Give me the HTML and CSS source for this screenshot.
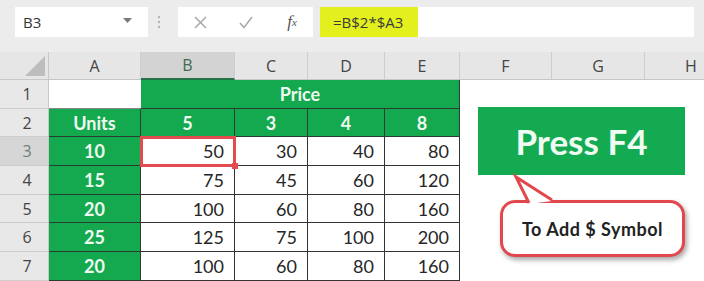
FILE: index.html
```html
<!DOCTYPE html>
<html lang="en">
<head>
    <meta charset="UTF-8">
    <title>Mixed Reference - Press F4</title>
    <link rel="stylesheet" href="styles.css">
</head>
<body>
    <div class="formula-bar">
        <div class="name-box">
            <span>B3</span>
            <svg class="drop" width="9" height="6" viewBox="0 0 9 6"><path d="M0 0 L9 0 L4.5 5 Z" fill="#7a7a7a"/></svg>
        </div>
        <div class="grip">
            <svg width="4" height="14" viewBox="0 0 4 14">
                <circle cx="2" cy="2" r="1.2" fill="#b5b5b5"/>
                <circle cx="2" cy="7" r="1.2" fill="#b5b5b5"/>
                <circle cx="2" cy="12" r="1.2" fill="#b5b5b5"/>
            </svg>
        </div>
        <div class="fx-buttons">
            <span class="slot">
                <svg width="13" height="13" viewBox="0 0 13 13"><path d="M1 1 L12 12 M12 1 L1 12" stroke="#a8a8a8" stroke-width="1.5" fill="none"/></svg>
            </span>
            <span class="slot">
                <svg width="14" height="13" viewBox="0 0 14 13"><path d="M1 7 L5 11.5 L13 1" stroke="#a8a8a8" stroke-width="1.5" fill="none"/></svg>
            </span>
            <span class="slot fx">f<sub>x</sub></span>
        </div>
        <div class="formula">
            <span class="formula-text">=B$2*$A3</span>
        </div>
    </div>

    <div class="sheet">
        <div class="grid">
            <!-- column headers -->
            <div class="corner">
                <svg width="20" height="20" viewBox="0 0 20 20"><path d="M20 0 L20 20 L0 20 Z" fill="#bdbdbd"/></svg>
            </div>
            <div class="col-head">A</div>
            <div class="col-head active">B</div>
            <div class="col-head">C</div>
            <div class="col-head">D</div>
            <div class="col-head">E</div>
            <div class="col-head">F</div>
            <div class="col-head">G</div>
            <div class="col-head">H</div>

            <!-- row 1 -->
            <div class="row-head">1</div>
            <div class="cell blank"></div>
            <div class="cell green merged">Price</div>
            <div class="cell"></div>
            <div class="cell"></div>
            <div class="cell"></div>

            <!-- row 2 -->
            <div class="row-head">2</div>
            <div class="cell green">Units</div>
            <div class="cell green">5</div>
            <div class="cell green">3</div>
            <div class="cell green">4</div>
            <div class="cell green">8</div>
            <div class="cell"></div>
            <div class="cell"></div>
            <div class="cell"></div>

            <!-- row 3 -->
            <div class="row-head active">3</div>
            <div class="cell green">10</div>
            <div class="cell num selected">50</div>
            <div class="cell num">30</div>
            <div class="cell num">40</div>
            <div class="cell num">80</div>
            <div class="cell"></div>
            <div class="cell"></div>
            <div class="cell"></div>

            <!-- row 4 -->
            <div class="row-head">4</div>
            <div class="cell green">15</div>
            <div class="cell num">75</div>
            <div class="cell num">45</div>
            <div class="cell num">60</div>
            <div class="cell num">120</div>
            <div class="cell"></div>
            <div class="cell"></div>
            <div class="cell"></div>

            <!-- row 5 -->
            <div class="row-head">5</div>
            <div class="cell green">20</div>
            <div class="cell num">100</div>
            <div class="cell num">60</div>
            <div class="cell num">80</div>
            <div class="cell num">160</div>
            <div class="cell"></div>
            <div class="cell"></div>
            <div class="cell"></div>

            <!-- row 6 -->
            <div class="row-head">6</div>
            <div class="cell green">25</div>
            <div class="cell num">125</div>
            <div class="cell num">75</div>
            <div class="cell num">100</div>
            <div class="cell num">200</div>
            <div class="cell"></div>
            <div class="cell"></div>
            <div class="cell"></div>

            <!-- row 7 -->
            <div class="row-head">7</div>
            <div class="cell green">20</div>
            <div class="cell num">100</div>
            <div class="cell num">60</div>
            <div class="cell num">80</div>
            <div class="cell num">160</div>
            <div class="cell"></div>
            <div class="cell"></div>
            <div class="cell"></div>
        </div>

        <!-- callouts sitting on top of the sheet -->
        <div class="press-box">Press F4</div>
        <div class="bubble">To Add $ Symbol</div>
        <svg class="tail" width="50" height="36" viewBox="0 0 50 36">
            <path d="M19 32 L6 5 L42 29 Z" fill="#ffffff"/>
            <path d="M19 31 L6 5 L42 28" fill="none" stroke="#e2474d" stroke-width="3" stroke-linejoin="miter"/>
        </svg>
    </div>
</body>
</html>
```

FILE: styles.css
```css
* {
    margin: 0;
    padding: 0;
    box-sizing: border-box;
}

body {
    width: 704px;
    height: 281px;
    overflow: hidden;
    background: #ffffff;
    font-family: 'Open Sans', sans-serif;
}

/* ---------- formula bar ---------- */

.formula-bar {
    height: 52px;
    background: #ececec;
    display: flex;
    align-items: flex-start;
    padding: 7px 0 0 15px;
}

.name-box {
    width: 133px;
    height: 30px;
    background: #ffffff;
    display: flex;
    align-items: center;
    justify-content: space-between;
    padding: 0 16px 0 8px;
    font-size: 15px;
    color: #333333;
}

.name-box .drop {
    margin-bottom: 3px;
}

.grip {
    width: 30px;
    height: 30px;
    display: flex;
    align-items: center;
    padding-left: 9px;
}

.fx-buttons {
    width: 135px;
    height: 30px;
    background: #ffffff;
    display: flex;
    align-items: center;
}

.slot {
    width: 45px;
    display: flex;
    justify-content: center;
    align-items: center;
}

.fx {
    font-family: 'Liberation Serif', serif;
    font-style: italic;
    font-size: 17px;
    color: #555555;
    padding-left: 3px;
}

.fx sub {
    font-size: 11px;
}

.formula {
    width: 374px;
    height: 30px;
    margin-left: 7px;
    background: #ffffff;
    display: flex;
}

.formula-text {
    width: 98px;
    background: #e4f01d;
    color: #3a3a3a;
    font-size: 15px;
    display: flex;
    align-items: center;
    padding-left: 13px;
}

/* ---------- sheet ---------- */

.sheet {
    position: relative;
    height: 229px;
    overflow: hidden;
}

.grid {
    display: grid;
    grid-template-columns: 49px 92px 94px 73px 77px 75px 92px 93px 93px;
    grid-template-rows: 28px 29px 28px 29px 29px 28px 29px 29px;
    width: 738px;
}

.corner {
    background: #e6e6e6;
    border-right: 1px solid #c8c8c8;
    border-bottom: 1px solid #c8c8c8;
    display: flex;
    align-items: flex-end;
    justify-content: flex-end;
    padding: 0 3px 3px 0;
}

.col-head {
    background: #e6e6e6;
    border-right: 1px solid #cdcdcd;
    border-bottom: 1px solid #c6c6c6;
    display: flex;
    align-items: center;
    justify-content: center;
    font-size: 16px;
    color: #444444;
}

.col-head.active {
    background: #d3d3d3;
    color: #3f6b4f;
    border-bottom: 2px solid #217346;
}

.row-head {
    background: #e8e8e8;
    border-right: 1px solid #c8c8c8;
    border-bottom: 1px solid #cdcdcd;
    display: flex;
    align-items: center;
    justify-content: center;
    padding-left: 6px;
    font-size: 16px;
    color: #444444;
}

.row-head.active {
    background: #d6d6d6;
    color: #6f7f74;
}

.cell {
    font-family: 'Lato', sans-serif;
    font-size: 18px;
    color: #262626;
    display: flex;
    align-items: center;
}

.cell.blank {
    border-bottom: 1px solid #8a8a8a;
}

.cell.green {
    background: #14a84f;
    color: #eefaf0;
    font-weight: 700;
    justify-content: center;
    border-right: 1px solid #2c3b30;
    border-bottom: 1px solid #2c3b30;
}

.cell.merged {
    grid-column: span 4;
}

.cell.num {
    justify-content: flex-end;
    padding-right: 10px;
    border-right: 1px solid #333333;
    border-bottom: 1px solid #333333;
}

.cell.selected {
    position: relative;
    outline: 3px solid #e34b4f;
    outline-offset: -2px;
}

.cell.selected::after {
    content: '';
    position: absolute;
    right: -4px;
    bottom: -4px;
    width: 6px;
    height: 6px;
    background: #e34b4f;
}

/* ---------- callouts ---------- */

.press-box {
    position: absolute;
    left: 478px;
    top: 55px;
    width: 207px;
    height: 68px;
    background: #13aa52;
    color: #eefcf2;
    font-family: 'Lato', sans-serif;
    font-weight: 700;
    font-size: 35px;
    display: flex;
    align-items: center;
    justify-content: center;
}

.bubble {
    position: absolute;
    left: 500px;
    top: 148px;
    width: 185px;
    height: 57px;
    background: #ffffff;
    border: 3px solid #e2474d;
    border-radius: 15px;
    box-shadow: 2px 3px 5px rgba(0, 0, 0, 0.35);
    font-family: 'Lato', sans-serif;
    font-weight: 700;
    font-size: 18px;
    letter-spacing: 0.5px;
    color: #222222;
    display: flex;
    align-items: center;
    justify-content: center;
}

.tail {
    position: absolute;
    left: 510px;
    top: 120px;
}
```
